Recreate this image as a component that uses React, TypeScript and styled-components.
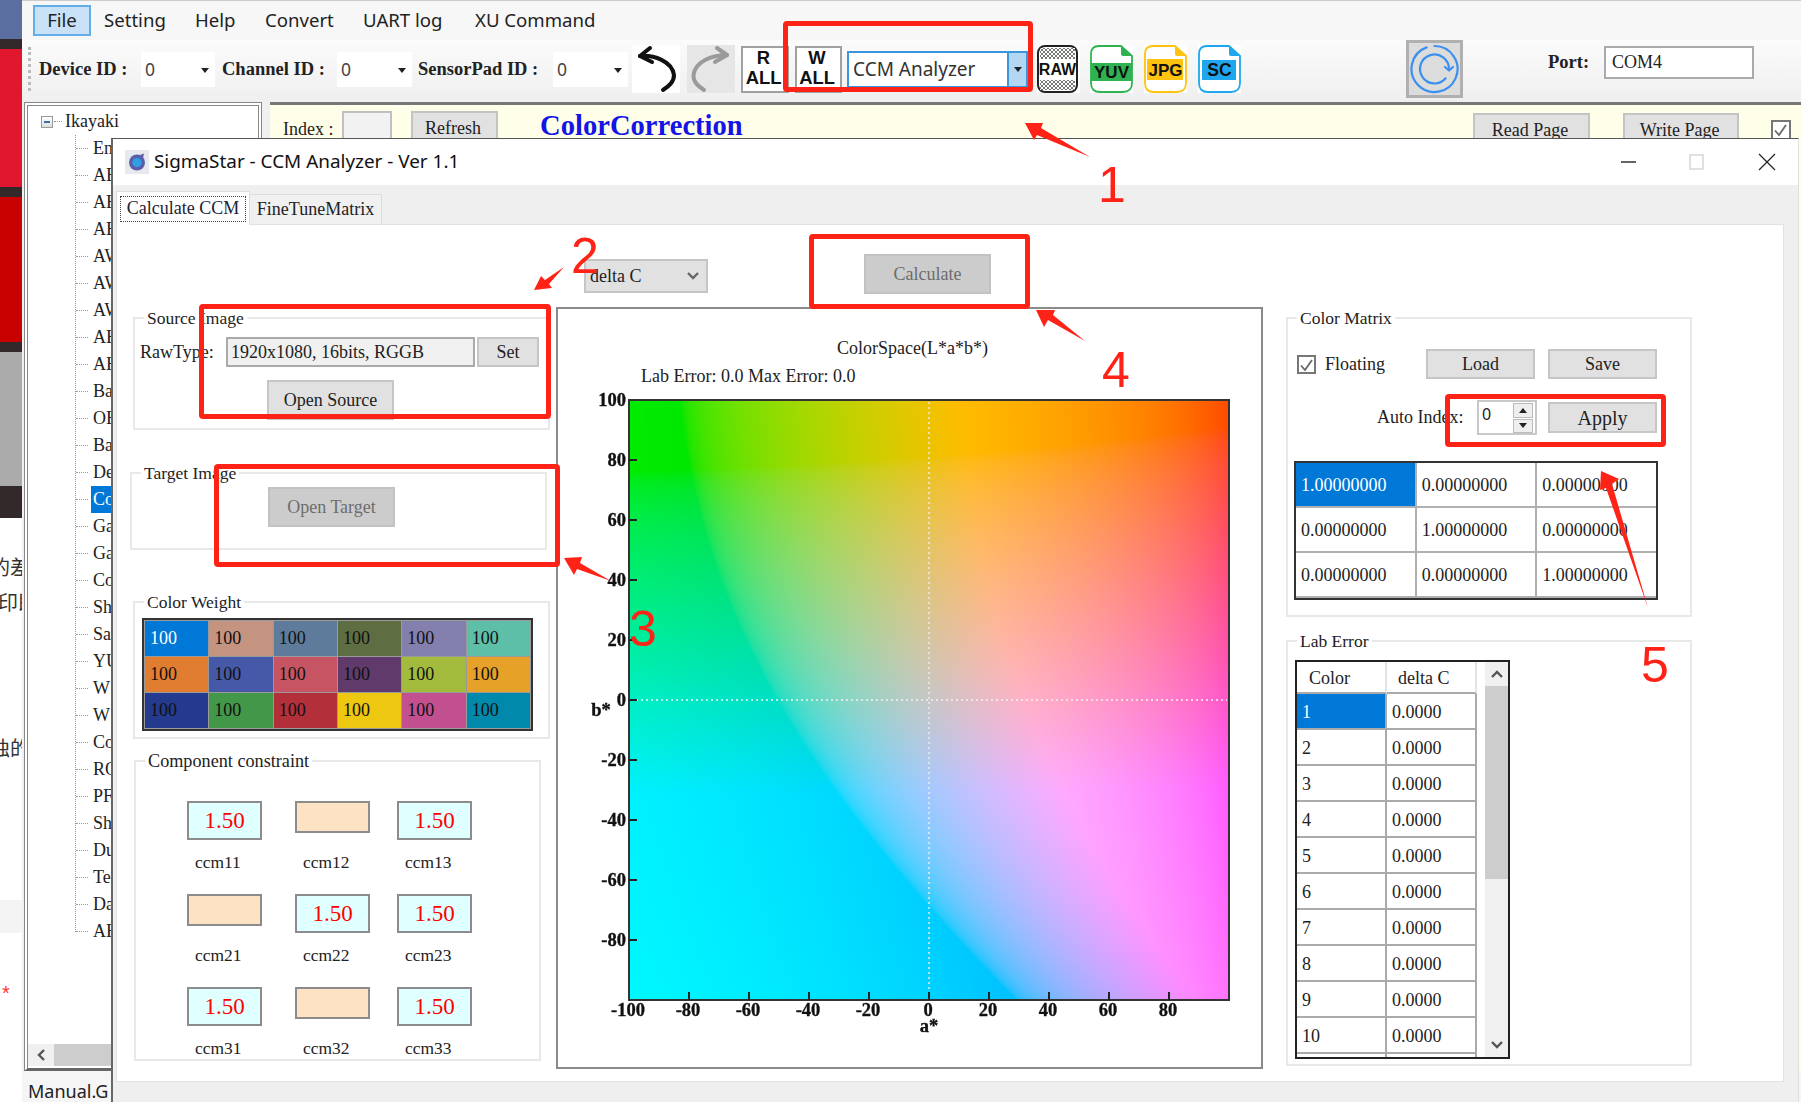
import React, { useEffect, useRef } from "react";
import styled, { createGlobalStyle } from "styled-components";

const serif = `"Liberation Serif", "Times New Roman", serif`;
const sans = `"Noto Sans", "Open Sans", sans-serif`;
const arial = `"Liberation Sans", Arial, sans-serif`;
const RED = "#ff2216";

const Global = createGlobalStyle`
  html, body { margin: 0; padding: 0; background: #fff; }
  * { box-sizing: border-box; }
`;

const Desktop = styled.div`
  position: relative;
  width: 1801px;
  height: 1102px;
  overflow: hidden;
  display: flex;
  font-family: ${serif};
  font-size: 18px;
  color: #222;
`;

/* ------- strip of the window behind ------- */
const BackStrip = styled.div`
  width: 22px;
  flex: none;
  display: flex;
  flex-direction: column;
  overflow: hidden;
  background: #fff;
`;
const Band = styled.div<{ $h: number; $c: string }>`
  height: ${(p) => p.$h}px;
  flex: none;
  background: ${(p) => p.$c};
`;
const BackText = styled.div<{ $top: number; $left?: number }>`
  margin: ${(p) => p.$top}px 0 0 ${(p) => p.$left ?? 0}px;
  font: 20px/26px "Noto Sans CJK SC", sans-serif;
  white-space: nowrap;
  color: #333;
`;
const BackPatch = styled.div`
  height: 33px;
  margin-top: 139px;
  background: #f4f4f4;
  flex: none;
`;
const BackStar = styled.div`
  margin: 50px 0 0 2px;
  font: 20px/20px ${arial};
  color: #f33;
`;

/* ------- main app ------- */
const MainApp = styled.div`
  flex: 1;
  min-width: 0;
  display: flex;
  flex-direction: column;
  background: #f0f0f0;
`;
const MenuBar = styled.div`
  height: 40px;
  flex: none;
  border-top: 1px solid #ccc;
  background: #f7f7f7;
  display: flex;
  align-items: center;
  padding-left: 11px;
  font: 18.6px ${sans};
`;
const FileMenu = styled.div`
  width: 58px;
  height: 31px;
  border: 2px solid #63aee8;
  background: #c8e1f6;
  display: flex;
  align-items: center;
  justify-content: center;
  padding-bottom: 2px;
  margin-right: 13px;
`;
const MenuItem = styled.div<{ $w: number }>`
  width: ${(p) => p.$w}px;
  color: #222;
  white-space: nowrap;
  padding-bottom: 2px;
`;
const Toolbar = styled.div`
  height: 62px;
  flex: none;
  background: linear-gradient(#fbfbfb, #efefef);
  display: flex;
  align-items: center;
  padding: 0 0 4px 6px;
`;
const Grip = styled.div`
  width: 3px;
  height: 44px;
  border-left: 3px dotted #bbb;
  margin-right: 8px;
`;
const ToolLabel = styled.div<{ $w: number; $mb?: number; $ml?: number }>`
  width: ${(p) => p.$w}px;
  font: bold 18.5px ${serif};
  white-space: nowrap;
  margin-left: ${(p) => p.$ml ?? 0}px;
  margin-bottom: ${(p) => p.$mb ?? 0}px;
  color: #222;
`;
const ToolSelect = styled.div<{ $w: number; $mr: number }>`
  position: relative;
  width: ${(p) => p.$w}px;
  height: 35px;
  background: #fff;
  margin-right: ${(p) => p.$mr}px;
  padding-left: 4px;
  display: flex;
  align-items: center;
  font: 17.5px ${sans};
  color: #444;
  &::after {
    content: "";
    position: absolute;
    right: 6px;
    top: 16px;
    border: 4px solid transparent;
    border-top: 5px solid #222;
    border-bottom: 0;
  }
`;
const IconButton = styled.div<{ $bg: string; $ml: number }>`
  width: 48px;
  height: 48px;
  flex: none;
  margin-left: ${(p) => p.$ml}px;
  background: ${(p) => p.$bg};
`;
const AllButton = styled.div<{ $w: number; $ml: number }>`
  width: ${(p) => p.$w}px;
  height: 47px;
  flex: none;
  margin-left: ${(p) => p.$ml}px;
  border: 2px solid #a0a0a0;
  background: #fff;
  display: flex;
  flex-direction: column;
  align-items: center;
  justify-content: center;
  padding: 0 3px 2px 0;
  font: bold 18.4px/20px ${arial};
  color: #111;
`;
const Combo = styled.div`
  width: 181px;
  height: 37px;
  flex: none;
  margin-left: 5px;
  border: 2px solid #3a96dd;
  background: #fff;
  display: flex;
  align-items: center;
  padding-left: 4px;
  font: 19px ${sans};
  color: #333;
`;
const ComboText = styled.div`
  flex: 1;
  white-space: nowrap;
`;
const ComboArrow = styled.div`
  width: 19px;
  height: 100%;
  flex: none;
  border-left: 2px solid #3a96dd;
  background: #b3d7f3;
  display: flex;
  align-items: center;
  justify-content: center;
  &::after {
    content: "";
    border: 4px solid transparent;
    border-top: 5px solid #222;
    border-bottom: 0;
  }
`;
const FileIconSlot = styled.div<{ $ml: number }>`
  width: 43px;
  height: 48px;
  flex: none;
  margin-left: ${(p) => p.$ml}px;
  background: #fff;
`;
const RefreshButton = styled.div`
  width: 57px;
  height: 58px;
  flex: none;
  margin-left: 165px;
  border: 3px solid #b0b0b0;
  background: #dcdcdc;
`;
const PortBox = styled.div`
  width: 150px;
  height: 33px;
  flex: none;
  margin-bottom: 13px;
  border: 2px solid #aaa;
  background: #fff;
  padding: 0 0 0 6px;
  display: flex;
  align-items: center;
  font: 18px ${serif};
`;
const WorkArea = styled.div`
  flex: 1;
  min-height: 0;
  display: flex;
  padding-left: 2px;
`;
const TreePanel = styled.div`
  width: 238px;
  flex: none;
  border: 4px double #888;
  border-bottom: 3px solid #666;
  background: #fff;
  display: flex;
  flex-direction: column;
  overflow: hidden;
`;
const TreeScroll = styled.div`
  flex: 1;
  min-height: 0;
  padding-top: 2px;
`;
const TreeRoot = styled.div`
  height: 27px;
  display: flex;
  align-items: center;
  padding-left: 13px;
`;
const Expander = styled.div`
  width: 12px;
  height: 12px;
  border: 1px solid #999;
  background: linear-gradient(#fff, #ddd);
  display: flex;
  align-items: center;
  justify-content: center;
  margin-right: 12px;
  position: relative;
  &::before {
    content: "";
    width: 6px;
    height: 2px;
    background: #3a6ea5;
  }
  &::after {
    content: "";
    position: absolute;
    left: 12px;
    width: 8px;
    border-top: 1px dotted #999;
  }
`;
const TreeList = styled.div`
  margin-left: 47px;
  border-left: 1px dotted #999;
  height: 797px;
`;
const TreeItem = styled.div`
  height: 27px;
  display: flex;
  align-items: center;
  position: relative;
  padding-left: 17px;
  white-space: nowrap;
  &::before {
    content: "";
    position: absolute;
    left: 0;
    width: 12px;
    border-top: 1px dotted #999;
  }
`;
const TreeText = styled.span<{ $sel?: boolean }>`
  line-height: 27px;
  margin-left: -2px;
  padding: 0 30px 0 2px;
  background: ${(p) => (p.$sel ? "#0078d7" : "transparent")};
  color: ${(p) => (p.$sel ? "#fff" : "#222")};
`;
const HScroll = styled.div`
  height: 22px;
  flex: none;
  margin-bottom: 2px;
  display: flex;
  background: #f0f0f0;
`;
const HScrollBtn = styled.div`
  width: 26px;
  display: flex;
  align-items: center;
  justify-content: center;
`;
const HScrollThumb = styled.div`
  flex: 1;
  background: #cdcdcd;
`;
const ParamPanel = styled.div`
  flex: 1;
  margin-left: 8px;
  border-top: 3px solid #777;
  background: #fffee8;
  display: flex;
  align-items: flex-start;
  padding: 6px 0 0 13px;
  overflow: hidden;
`;
const IndexLabel = styled.div`
  width: 59px;
  margin-top: 8px;
`;
const IndexBox = styled.div`
  width: 50px;
  height: 34px;
  border: 2px solid #c0c0c0;
  background: #f2f2f2;
`;
const PanelButton = styled.div<{ $w: number; $ml: number; $mt?: number }>`
  width: ${(p) => p.$w}px;
  height: 34px;
  flex: none;
  margin-left: ${(p) => p.$ml}px;
  margin-top: ${(p) => p.$mt ?? 0}px;
  border: 2px solid #c4c4c4;
  background: #e1e1e1;
  display: flex;
  justify-content: center;
  padding: 5px 3px 0 0;
`;
const PageTitle = styled.div`
  width: 933px;
  margin-left: 42px;
  font: bold 28.6px/30px ${serif};
  color: #1414e6;
`;
const PanelCheck = styled.div`
  width: 20px;
  height: 20px;
  flex: none;
  margin: 9px 0 0 32px;
  border: 2px solid #777;
  background: #fff;
`;
const StatusBar = styled.div`
  height: 31px;
  flex: none;
  background: #f5f5f5;
  padding: 9px 0 0 6px;
  font: 18px/22px ${sans};
  white-space: nowrap;
`;

/* ------- floating window ------- */
const ToolWindow = styled.div`
  position: absolute;
  left: 111px;
  top: 138px;
  width: 1688px;
  height: 964px;
  isolation: isolate;
  border-top: 1px solid #555;
  border-left: 2px solid #666;
  border-right: 1px solid #ddd;
  background: #efefef;
  display: flex;
  flex-direction: column;
`;
const TitleBar = styled.div`
  height: 46px;
  flex: none;
  background: #fff;
  display: flex;
  align-items: center;
  padding-left: 12px;
`;
const TitleText = styled.div`
  margin-left: 5px;
  padding-bottom: 2px;
  font: 18.9px ${sans};
  color: #111;
  flex: 1;
`;
const WinBtn = styled.div<{ $mr: number }>`
  width: 18px;
  height: 18px;
  margin-right: ${(p) => p.$mr}px;
  flex: none;
`;
const TabStrip = styled.div`
  height: 39px;
  flex: none;
  display: flex;
  align-items: flex-end;
  padding-left: 3px;
`;
const ActiveTab = styled.div`
  width: 134px;
  height: 34px;
  margin-bottom: -1px;
  position: relative;
  z-index: 1;
  border: 1px solid #ddd;
  border-bottom: 0;
  background: #fff;
  padding: 4px 3px 0;
`;
const TabFocus = styled.div`
  height: 26px;
  border: 1.5px dotted #444;
  display: flex;
  align-items: center;
  justify-content: center;
  padding-bottom: 1px;
  color: #223;
`;
const Tab = styled.div`
  width: 132px;
  height: 30px;
  border: 1px solid #ddd;
  border-bottom: 0;
  border-left: 0;
  background: #f0f0f0;
  display: flex;
  align-items: center;
  justify-content: center;
`;
const TabPage = styled.div`
  width: 1668px;
  height: 858px;
  margin-left: 3px;
  flex: none;
  border: 1px solid #e2e2e2;
  background: #fff;
  padding-top: 29px;
`;
const TopRow = styled.div`
  height: 40px;
  margin-bottom: 13px;
  display: flex;
  align-items: flex-start;
  padding-left: 467px;
`;
const DropDown = styled.div`
  width: 124px;
  height: 34px;
  margin-top: 5px;
  border: 2px solid #c6c6c6;
  background: #e1e1e1;
  display: flex;
  align-items: center;
  justify-content: space-between;
  padding: 0 6px 0 4px;
`;
const GrayButton = styled.div<{ $w: number; $h: number; $off?: boolean; $ml?: number; $mt?: number; $fs?: number }>`
  width: ${(p) => p.$w}px;
  height: ${(p) => p.$h}px;
  flex: none;
  margin-left: ${(p) => p.$ml ?? 0}px;
  margin-top: ${(p) => p.$mt ?? 0}px;
  border: 2px solid ${(p) => (p.$off ? "#c2c2c2" : "#c6c6c6")};
  background: ${(p) => (p.$off ? "#cccccc" : "#e1e1e1")};
  color: ${(p) => (p.$off ? "#6d6d6d" : "#222")};
  font-size: ${(p) => p.$fs ?? 18}px;
  display: flex;
  align-items: center;
  justify-content: center;
  padding-top: 1px;
`;
const Columns = styled.div`
  display: flex;
  align-items: flex-start;
`;
const LeftColumn = styled.div`
  width: 426px;
  margin-left: 13px;
  flex: none;
`;
const RightColumn = styled.div`
  width: 406px;
  margin-left: 23px;
  flex: none;
`;
const Group = styled.fieldset<{ $w: number; $h: number; $top: number; $left?: number }>`
  width: ${(p) => p.$w}px;
  height: ${(p) => p.$h}px;
  margin: ${(p) => p.$top}px 0 0 ${(p) => p.$left ?? 0}px;
  padding: 0;
  min-width: 0;
  border: 2px solid #e8e8e8;
  display: block;
`;
const GroupTitle = styled.legend<{ $fs?: number }>`
  margin-left: 9px;
  padding: 0 3px;
  font: ${(p) => p.$fs ?? 17.5}px/20px ${serif};
  color: #222;
`;
const GroupBody = styled.div<{ $pt: number; $pl: number }>`
  padding: ${(p) => p.$pt}px 0 0 ${(p) => p.$pl}px;
`;
const SourceRow = styled.div`
  display: flex;
`;
const RawLabel = styled.div`
  width: 86px;
  line-height: 30px;
`;
const RawInput = styled.div`
  width: 249px;
  height: 30px;
  margin-right: 2px;
  border: 2px solid #aaa;
  background: #f0f0f0;
  padding-left: 3px;
  line-height: 27px;
`;
const WeightTable = styled.div`
  width: 391px;
  border: 2px solid #333;
  padding: 1px;
  background: #9a9a9a;
  display: grid;
  grid-template-columns: repeat(6, 1fr);
  grid-auto-rows: 35px;
  gap: 1px;
`;
const WeightCell = styled.div<{ $c: string; $sel?: boolean }>`
  background: ${(p) => p.$c};
  color: ${(p) => (p.$sel ? "#fff" : "#111")};
  padding-left: 5px;
  line-height: 34px;
`;
const CcmGrid = styled.div`
  display: grid;
  grid-template-columns: 108px 102px 75px;
  grid-auto-rows: 93px;
`;
const CcmItem = styled.div`
  position: relative;
`;
const CcmBox = styled.div<{ $empty?: boolean }>`
  width: 75px;
  height: ${(p) => (p.$empty ? 32 : 39)}px;
  border: 2px solid #8c8c8c;
  background: ${(p) => (p.$empty ? "#fde3c3" : "#e0ffff")};
  color: #ff0000;
  font-size: 23px;
  line-height: 35px;
  text-align: center;
`;
const CcmLabel = styled.div<{ $empty?: boolean }>`
  margin: ${(p) => (p.$empty ? 19 : 12)}px 0 0 8px;
  font-size: 17.4px;
  line-height: 20px;
`;
const ChartBox = styled.div`
  width: 707px;
  height: 762px;
  flex: none;
  border: 2px solid #8a8a8a;
  padding-top: 29px;
`;
const ChartTitle = styled.div`
  padding-left: 6px;
  text-align: center;
  line-height: 20px;
`;
const ChartSub = styled.div`
  margin: 8px 0 14px 83px;
  line-height: 20px;
`;
const PlotArea = styled.div`
  position: relative;
  width: 600px;
  height: 600px;
  margin-left: 71px;
`;
const PlotCanvas = styled.canvas`
  display: block;
  width: 600px;
  height: 600px;
`;
const PlotOverlay = styled.svg`
  position: absolute;
  left: 0;
  top: 0;
  overflow: visible;
`;
const MatrixRow = styled.div<{ $mt?: number; $ml?: number }>`
  display: flex;
  align-items: center;
  margin: ${(p) => p.$mt ?? 0}px 0 0 ${(p) => p.$ml ?? 0}px;
`;
const CheckBox = styled.div`
  width: 19px;
  height: 19px;
  flex: none;
  border: 2px solid #777;
  background: #fff;
`;
const FloatLabel = styled.div`
  width: 101px;
  margin-left: 9px;
  flex: none;
  padding-top: 1px;
`;
const AutoLabel = styled.div`
  width: 100px;
  flex: none;
`;
const Spinner = styled.div`
  width: 60px;
  height: 35px;
  flex: none;
  margin-right: 11px;
  border: 2px solid #c8c8c8;
  background: #fff;
  display: flex;
  justify-content: space-between;
  padding: 0 2px 0 3px;
  font: 16px/24px ${sans};
`;
const SpinButtons = styled.div`
  width: 20px;
  display: flex;
  flex-direction: column;
  gap: 1px;
  padding-top: 1px;
`;
const SpinBtn = styled.div<{ $down?: boolean }>`
  flex: 1;
  background: #eee;
  border: 1px solid #bbb;
  display: flex;
  align-items: center;
  justify-content: center;
  &::after {
    content: "";
    border: 4px solid transparent;
    ${(p) => (p.$down ? "border-top: 5px solid #222; border-bottom: 0;" : "border-bottom: 5px solid #222; border-top: 0;")}
  }
`;
const MatrixTable = styled.div`
  width: 364px;
  height: 139px;
  margin: 26px 0 0 -3px;
  border: 2px solid #333;
  background: #b0b0b0;
  display: grid;
  grid-template-columns: repeat(3, 1fr);
  grid-template-rows: repeat(3, 43px);
  gap: 2px;
`;
const TableCell = styled.div<{ $sel?: boolean }>`
  background: ${(p) => (p.$sel ? "#0078d7" : "#fff")};
  color: ${(p) => (p.$sel ? "#fff" : "#222")};
  padding: 2px 0 0 5px;
  display: flex;
  align-items: center;
`;
const ErrorTable = styled.div`
  width: 215px;
  height: 399px;
  border: 2px solid #222;
  background: #fff;
  display: flex;
  overflow: hidden;
`;
const ErrorGrid = styled.div`
  width: 180px;
  flex: none;
  display: grid;
  grid-template-columns: 90px 90px;
  grid-template-rows: 32px;
  grid-auto-rows: 36px;
`;
const HeadCell = styled.div<{ $pl: number }>`
  padding: 2px 0 0 ${(p) => p.$pl}px;
  border-right: 2px solid #e4e4e4;
  border-bottom: 2px solid #aaa;
  display: flex;
  align-items: center;
`;
const ErrCell = styled.div<{ $sel?: boolean }>`
  padding: 2px 0 0 5px;
  border-right: 2px solid #aaa;
  border-bottom: 2px solid #aaa;
  background: ${(p) => (p.$sel ? "#0078d7" : "#fff")};
  color: ${(p) => (p.$sel ? "#fff" : "#222")};
  display: flex;
  align-items: center;
`;
const VScroll = styled.div`
  width: 23px;
  margin-left: 8px;
  flex: none;
  background: #f0f0f0;
  display: flex;
  flex-direction: column;
`;
const VScrollBtn = styled.div`
  height: 24px;
  flex: none;
  display: flex;
  align-items: center;
  justify-content: center;
`;
const VThumb = styled.div`
  height: 193px;
  flex: none;
  background: #cdcdcd;
`;
const VTrack = styled.div`
  flex: 1;
`;

/* ------- red annotations, on top of the screenshot ------- */
const Callout = styled.div<{ $x: number; $y: number; $w: number; $h: number }>`
  position: absolute;
  left: ${(p) => p.$x}px;
  top: ${(p) => p.$y}px;
  width: ${(p) => p.$w}px;
  height: ${(p) => p.$h}px;
  border: 5px solid ${RED};
  border-radius: 4px;
`;
const Digit = styled.div<{ $x: number; $y: number }>`
  position: absolute;
  left: ${(p) => p.$x}px;
  top: ${(p) => p.$y}px;
  font: 50px/50px ${arial};
  color: ${RED};
`;
const ArrowLayer = styled.svg`
  position: absolute;
  left: 0;
  top: 0;
`;

/* ------- drawings ------- */
function labToRgb(L: number, a: number, b: number): [number, number, number] {
  const fy = (L + 16) / 116;
  const fx = fy + a / 500;
  const fz = fy - b / 200;
  const inv = (t: number) => (t > 6 / 29 ? t * t * t : 3 * (6 / 29) * (6 / 29) * (t - 4 / 29));
  const X = 0.95047 * inv(fx);
  const Y = inv(fy);
  const Z = 1.08883 * inv(fz);
  const lin = [
    3.2406 * X - 1.5372 * Y - 0.4986 * Z,
    -0.9689 * X + 1.8758 * Y + 0.0415 * Z,
    0.0557 * X - 0.204 * Y + 1.057 * Z,
  ];
  const g = (c: number) => {
    const v = Math.min(1, Math.max(0, c));
    return 255 * (v <= 0.0031308 ? 12.92 * v : 1.055 * Math.pow(v, 1 / 2.4) - 0.055);
  };
  return [g(lin[0]), g(lin[1]), g(lin[2])];
}

function LabPlane() {
  const ref = useRef<HTMLCanvasElement>(null);
  useEffect(() => {
    const c = ref.current;
    const ctx = c && c.getContext("2d");
    if (!ctx) return;
    const img = ctx.createImageData(600, 600);
    for (let y = 0; y < 600; y++) {
      for (let x = 0; x < 600; x++) {
        const [r, g, b] = labToRgb(80, -100 + x / 3, 100 - y / 3);
        const i = (y * 600 + x) * 4;
        img.data[i] = r;
        img.data[i + 1] = g;
        img.data[i + 2] = b;
        img.data[i + 3] = 255;
      }
    }
    ctx.putImageData(img, 0, 0);
  }, []);
  return <PlotCanvas ref={ref} width={600} height={600} />;
}

const axisFont = { fontFamily: serif, fontWeight: 700, fontSize: 18.5, fill: "#111", stroke: "#111", strokeWidth: 0.35 };

function PlotMarks() {
  const xs = [-100, -80, -60, -40, -20, 0, 20, 40, 60, 80];
  const ys = [100, 80, 60, 40, 20, 0, -20, -40, -60, -80];
  return (
    <PlotOverlay width={600} height={600} viewBox="0 0 600 600">
      <line x1={300} y1={2} x2={300} y2={598} stroke="#ececec" strokeWidth={1.5} strokeDasharray="2 3" />
      <line x1={2} y1={300} x2={598} y2={300} stroke="#f2f2f2" strokeWidth={1.5} strokeDasharray="2 3" />
      <rect x={0} y={0} width={600} height={600} fill="none" stroke="#333" strokeWidth={2} />
      {xs.map((v) => {
        const x = (v + 100) * 3;
        return (
          <g key={v}>
            {v !== -100 && <line x1={x} y1={592} x2={x} y2={600} stroke="#222" strokeWidth={2} />}
            <text x={x - 1} y={616} textAnchor="middle" {...axisFont}>{v}</text>
          </g>
        );
      })}
      {ys.map((v) => {
        const y = (100 - v) * 3;
        return (
          <g key={v}>
            {v !== 100 && <line x1={0} y1={y} x2={8} y2={y} stroke="#222" strokeWidth={2} />}
            <text x={-3} y={y + 6} textAnchor="end" {...axisFont}>{v}</text>
          </g>
        );
      })}
      <text x={300} y={632} textAnchor="middle" {...axisFont}>a*</text>
      <text x={-28} y={316} textAnchor="middle" {...axisFont}>b*</text>
    </PlotOverlay>
  );
}

function UndoIcon({ flip }: { flip?: boolean }) {
  return flip ? (
    <svg width={48} height={48} viewBox="0 0 48 48" fill="none" stroke="#9a9a9a" strokeWidth={4} strokeLinecap="round" strokeLinejoin="round">
      <path d="M40 10C26 10 8 16 6.5 30C6 37 11 41 17 45" />
      <path d="M30 3L40 10L28 17" />
    </svg>
  ) : (
    <svg width={48} height={48} viewBox="0 0 48 48" fill="none" stroke="#111" strokeWidth={4} strokeLinecap="round" strokeLinejoin="round">
      <path d="M8 11C22 10 40 16 42 30C42 37 37 41 31 45" />
      <path d="M18 3L8 11L20 17" />
    </svg>
  );
}

function DocIcon({ color, label, bandY, bandH, bandX, bandW, fs }: { color: string; label: string; bandY: number; bandH: number; bandX: number; bandW: number; fs: number }) {
  return (
    <svg width={43} height={48} viewBox="0 0 43 48">
      <path d="M9 1H31L42 11V38Q42 47 33 47H10Q1 47 1 38V9Q1 1 9 1Z" fill="#fff" stroke={color} strokeWidth={1.8} />
      <path d="M31 1L42 11H33Q31 11 31 9Z" fill={color} />
      <rect x={bandX} y={bandY} width={bandW} height={bandH} fill={color} />
      <text x={21.5} y={bandY + bandH / 2 + fs * 0.36} textAnchor="middle" fontFamily={arial} fontWeight={700} fontSize={fs} fill="#111">{label}</text>
    </svg>
  );
}

function RawIcon() {
  return (
    <svg width={43} height={48} viewBox="0 0 43 48">
      <defs>
        <pattern id="chk" width={4} height={4} patternUnits="userSpaceOnUse">
          <rect width={4} height={4} fill="#fff" />
          <rect width={2} height={2} fill="#777" />
          <rect x={2} y={2} width={2} height={2} fill="#777" />
        </pattern>
      </defs>
      <rect x={1} y={1} width={39} height={46} rx={7} fill="#fff" stroke="#222" strokeWidth={2} />
      <rect x={3} y={3} width={35} height={11} fill="url(#chk)" />
      <rect x={3} y={35} width={35} height={10} fill="url(#chk)" />
      <text x={20.5} y={30} textAnchor="middle" fontFamily={arial} fontWeight={700} fontSize={16} fill="#111">RAW</text>
    </svg>
  );
}

function RefreshIcon() {
  return (
    <svg width={51} height={52} viewBox="0 0 51 52" fill="none" stroke="#3b8fee" strokeWidth={2.2} strokeLinecap="round" strokeLinejoin="round">
      <path d="M25.5 3A23 23 0 1 1 17.6 4.4" />
      <path d="M40 26A14.5 14.5 0 1 0 36.6 35.3" />
      <path d="M36 24L40 27.5L44 24" />
    </svg>
  );
}

function AppLogo() {
  return (
    <svg width={24} height={24} viewBox="0 0 24 24">
      <rect width={24} height={24} fill="#e8e8ef" />
      <circle cx={12} cy={12.5} r={8} fill="#5a5fa8" />
      <circle cx={12} cy={12.5} r={4.6} fill="#2ea0e6" />
      <path d="M15 5L19 3.5L18 8Z" fill="#5a5fa8" />
    </svg>
  );
}

function CheckMark() {
  return (
    <svg width={15} height={15} viewBox="0 0 15 15" fill="none" stroke="#6a6a6a" strokeWidth={1.8}>
      <path d="M2 7.5L6 12L13 2" />
    </svg>
  );
}

function Chevron({ dir = "down", color = "#555" }: { dir?: "up" | "down" | "left"; color?: string }) {
  if (dir === "left") {
    return (
      <svg width={10} height={14} viewBox="0 0 10 14" fill="none" stroke={color} strokeWidth={2.4}>
        <path d="M8 2L3 7L8 12" />
      </svg>
    );
  }
  return (
    <svg width={14} height={10} viewBox="0 0 14 10" fill="none" stroke={color} strokeWidth={2.4}>
      <path d={dir === "up" ? "M2 8L7 3L12 8" : "M2 2L7 7L12 2"} />
    </svg>
  );
}

const treeItems = ["En", "AE", "AE", "AE", "AW", "AW", "AW", "AE", "AE", "Ba", "OB", "Ba", "De", "Co", "Ga", "Ga", "Co", "Sh", "Sa", "YU", "W", "W", "Co", "RO", "PF", "Sh", "Du", "Te", "Da", "AE"];

const weights = ["#0078d7", "#c49480", "#5e7b9c", "#5f6d42", "#8380ad", "#5ebfa9", "#e07d30", "#4559a8", "#c75463", "#5f3a6b", "#a3bb3c", "#e6a228", "#243a8f", "#429848", "#b3303a", "#edc710", "#c2508f", "#0089ab"];

const ccm = [
  ["ccm11", false], ["ccm12", true], ["ccm13", false],
  ["ccm21", true], ["ccm22", false], ["ccm23", false],
  ["ccm31", false], ["ccm32", true], ["ccm33", false],
] as const;

const matrix = ["1.00000000", "0.00000000", "0.00000000", "0.00000000", "1.00000000", "0.00000000", "0.00000000", "0.00000000", "1.00000000"];

const arrows = [
  "1025,123 1043,123 1041,128 1090,157 1037,135 1034,140",
  "534,290 541,276 545,280 564,267 549,284 552,288",
  "564,558 582,557 580,563 611,581 577,569 574,575",
  "1036,310 1055,310 1053,315 1085,341 1048,320 1044,327",
  "1601,471 1619,479 1612,484 1648,608 1606,488 1600,490",
];

export default function App() {
  return (
    <>
      <Global />
      <Desktop>
        <BackStrip>
          <Band $h={39} $c="#5a6f9f" />
          <Band $h={10} $c="#33292a" />
          <Band $h={138} $c="#e1172f" />
          <Band $h={10} $c="#33292a" />
          <Band $h={145} $c="#c80000" />
          <Band $h={10} $c="#33292a" />
          <Band $h={134} $c="#ababab" />
          <Band $h={32} $c="#33292a" />
          <BackText $top={36} $left={-10}>的差</BackText>
          <BackText $top={9} $left={-2}>印即</BackText>
          <BackText $top={120} $left={-10}>独的</BackText>
          <BackPatch />
          <BackStar>*</BackStar>
        </BackStrip>

        <MainApp>
          <MenuBar>
            <FileMenu>File</FileMenu>
            <MenuItem $w={91}>Setting</MenuItem>
            <MenuItem $w={70}>Help</MenuItem>
            <MenuItem $w={98}>Convert</MenuItem>
            <MenuItem $w={112}>UART log</MenuItem>
            <MenuItem $w={130}>XU Command</MenuItem>
          </MenuBar>

          <Toolbar>
            <Grip />
            <ToolLabel $w={102}>Device ID :</ToolLabel>
            <ToolSelect $w={74} $mr={7}>0</ToolSelect>
            <ToolLabel $w={115}>Channel ID :</ToolLabel>
            <ToolSelect $w={75} $mr={6}>0</ToolSelect>
            <ToolLabel $w={135}>SensorPad ID :</ToolLabel>
            <ToolSelect $w={75} $mr={0}>0</ToolSelect>
            <IconButton $bg="#fff" $ml={4}><UndoIcon /></IconButton>
            <IconButton $bg="#e6e6e6" $ml={7}><UndoIcon flip /></IconButton>
            <AllButton $w={48} $ml={6}><span>R</span><span>ALL</span></AllButton>
            <AllButton $w={47} $ml={6}><span>W</span><span>ALL</span></AllButton>
            <Combo>
              <ComboText>CCM Analyzer</ComboText>
              <ComboArrow />
            </Combo>
            <FileIconSlot $ml={9}><RawIcon /></FileIconSlot>
            <FileIconSlot $ml={10}>
              <DocIcon color="#2eb350" label="YUV" bandX={1} bandW={41} bandY={18} bandH={18} fs={17} />
            </FileIconSlot>
            <FileIconSlot $ml={11}>
              <DocIcon color="#ffc20e" label="JPG" bandX={3} bandW={36} bandY={14} bandH={21} fs={17} />
            </FileIconSlot>
            <FileIconSlot $ml={11}>
              <DocIcon color="#1ea7ef" label="SC" bandX={4} bandW={34} bandY={15} bandH={20} fs={17.5} />
            </FileIconSlot>
            <RefreshButton><RefreshIcon /></RefreshButton>
            <ToolLabel $w={56} $mb={14} $ml={85}>Port:</ToolLabel>
            <PortBox>COM4</PortBox>
          </Toolbar>

          <WorkArea>
            <TreePanel>
              <TreeScroll>
                <TreeRoot>
                  <Expander />
                  Ikayaki
                </TreeRoot>
                <TreeList>
                  {treeItems.map((t, i) => (
                    <TreeItem key={i}>
                      <TreeText $sel={i === 13}>{t}</TreeText>
                    </TreeItem>
                  ))}
                </TreeList>
              </TreeScroll>
              <HScroll>
                <HScrollBtn><Chevron dir="left" /></HScrollBtn>
                <HScrollThumb />
              </HScroll>
            </TreePanel>
            <ParamPanel>
              <IndexLabel>Index :</IndexLabel>
              <IndexBox />
              <PanelButton $w={87} $ml={19}>Refresh</PanelButton>
              <PageTitle>ColorCorrection</PageTitle>
              <PanelButton $w={117} $ml={0} $mt={2}>Read Page</PanelButton>
              <PanelButton $w={116} $ml={33} $mt={2}>Write Page</PanelButton>
              <PanelCheck><CheckMark /></PanelCheck>
            </ParamPanel>
          </WorkArea>

          <StatusBar>Manual.G</StatusBar>
        </MainApp>

        <ToolWindow>
          <TitleBar>
            <AppLogo />
            <TitleText>SigmaStar - CCM Analyzer - Ver 1.1</TitleText>
            <WinBtn $mr={51}>
              <svg width={18} height={18} viewBox="0 0 18 18"><path d="M2 9H17" stroke="#222" strokeWidth={1.4} /></svg>
            </WinBtn>
            <WinBtn $mr={52}>
              <svg width={18} height={18} viewBox="0 0 18 18"><rect x={2} y={2} width={13} height={14} fill="none" stroke="#ccc" strokeWidth={1.2} /></svg>
            </WinBtn>
            <WinBtn $mr={22}>
              <svg width={18} height={18} viewBox="0 0 18 18"><path d="M1 1L17 17M17 1L1 17" stroke="#222" strokeWidth={1.2} /></svg>
            </WinBtn>
          </TitleBar>

          <TabStrip>
            <ActiveTab><TabFocus>Calculate CCM</TabFocus></ActiveTab>
            <Tab>FineTuneMatrix</Tab>
          </TabStrip>

          <TabPage>
            <TopRow>
              <DropDown>
                delta C
                <Chevron color="#666" />
              </DropDown>
              <GrayButton $w={127} $h={40} $off $ml={156}>Calculate</GrayButton>
            </TopRow>

            <Columns>
              <LeftColumn>
                <Group $w={417} $h={122} $top={1} $left={3}>
                  <GroupTitle>Source Image</GroupTitle>
                  <GroupBody $pt={9} $pl={5}>
                    <SourceRow>
                      <RawLabel>RawType:</RawLabel>
                      <RawInput>1920x1080, 16bits, RGGB</RawInput>
                      <GrayButton $w={62} $h={30}>Set</GrayButton>
                    </SourceRow>
                    <GrayButton $w={127} $h={40} $ml={127} $mt={13}>Open Source</GrayButton>
                  </GroupBody>
                </Group>

                <Group $w={417} $h={87} $top={33}>
                  <GroupTitle>Target Image</GroupTitle>
                  <GroupBody $pt={4} $pl={136}>
                    <GrayButton $w={127} $h={40} $off>Open Target</GrayButton>
                  </GroupBody>
                </Group>

                <Group $w={417} $h={147} $top={42} $left={3}>
                  <GroupTitle>Color Weight</GroupTitle>
                  <GroupBody $pt={6} $pl={7}>
                    <WeightTable>
                      {weights.map((c, i) => (
                        <WeightCell key={i} $c={c} $sel={i === 0}>100</WeightCell>
                      ))}
                    </WeightTable>
                  </GroupBody>
                </Group>

                <Group $w={407} $h={310} $top={12} $left={4}>
                  <GroupTitle $fs={18.2}>Component constraint</GroupTitle>
                  <GroupBody $pt={30} $pl={51}>
                    <CcmGrid>
                      {ccm.map(([name, empty]) => (
                        <CcmItem key={name}>
                          <CcmBox $empty={empty}>{empty ? "" : "1.50"}</CcmBox>
                          <CcmLabel $empty={empty}>{name}</CcmLabel>
                        </CcmItem>
                      ))}
                    </CcmGrid>
                  </GroupBody>
                </Group>
              </LeftColumn>

              <ChartBox>
                <ChartTitle>ColorSpace(L*a*b*)</ChartTitle>
                <ChartSub>Lab Error: 0.0 Max Error: 0.0</ChartSub>
                <PlotArea>
                  <LabPlane />
                  <PlotMarks />
                </PlotArea>
              </ChartBox>

              <RightColumn>
                <Group $w={406} $h={309} $top={1}>
                  <GroupTitle>Color Matrix</GroupTitle>
                  <GroupBody $pt={21} $pl={9}>
                    <MatrixRow>
                      <CheckBox><CheckMark /></CheckBox>
                      <FloatLabel>Floating</FloatLabel>
                      <GrayButton $w={109} $h={30}>Load</GrayButton>
                      <GrayButton $w={109} $h={30} $ml={13}>Save</GrayButton>
                    </MatrixRow>
                    <MatrixRow $mt={21} $ml={80}>
                      <AutoLabel>Auto Index:</AutoLabel>
                      <Spinner>
                        0
                        <SpinButtons>
                          <SpinBtn />
                          <SpinBtn $down />
                        </SpinButtons>
                      </Spinner>
                      <GrayButton $w={109} $h={31} $fs={20}>Apply</GrayButton>
                    </MatrixRow>
                    <MatrixTable>
                      {matrix.map((v, i) => (
                        <TableCell key={i} $sel={i === 0}>{v}</TableCell>
                      ))}
                    </MatrixTable>
                  </GroupBody>
                </Group>

                <Group $w={406} $h={435} $top={14}>
                  <GroupTitle>Lab Error</GroupTitle>
                  <GroupBody $pt={9} $pl={7}>
                    <ErrorTable>
                      <ErrorGrid>
                        <HeadCell $pl={12}>Color</HeadCell>
                        <HeadCell $pl={11}>delta C</HeadCell>
                        {Array.from({ length: 10 }, (_, i) => (
                          <React.Fragment key={i}>
                            <ErrCell $sel={i === 0}>{i + 1}</ErrCell>
                            <ErrCell>0.0000</ErrCell>
                          </React.Fragment>
                        ))}
                        <ErrCell />
                        <ErrCell />
                      </ErrorGrid>
                      <VScroll>
                        <VScrollBtn><Chevron dir="up" /></VScrollBtn>
                        <VThumb />
                        <VTrack />
                        <VScrollBtn><Chevron /></VScrollBtn>
                      </VScroll>
                    </ErrorTable>
                  </GroupBody>
                </Group>
              </RightColumn>
            </Columns>
          </TabPage>
        </ToolWindow>

        <Callout $x={783} $y={21} $w={250} $h={71} />
        <Callout $x={199} $y={304} $w={352} $h={115} />
        <Callout $x={214} $y={464} $w={346} $h={103} />
        <Callout $x={809} $y={234} $w={221} $h={75} />
        <Callout $x={1445} $y={394} $w={221} $h={53} />
        <ArrowLayer width={1801} height={1102} viewBox="0 0 1801 1102">
          {arrows.map((p) => (
            <polygon key={p} points={p} fill={RED} />
          ))}
        </ArrowLayer>
        <Digit $x={1098} $y={160}>1</Digit>
        <Digit $x={571} $y={231}>2</Digit>
        <Digit $x={629} $y={604}>3</Digit>
        <Digit $x={1102} $y={345}>4</Digit>
        <Digit $x={1641} $y={640}>5</Digit>
      </Desktop>
    </>
  );
}
